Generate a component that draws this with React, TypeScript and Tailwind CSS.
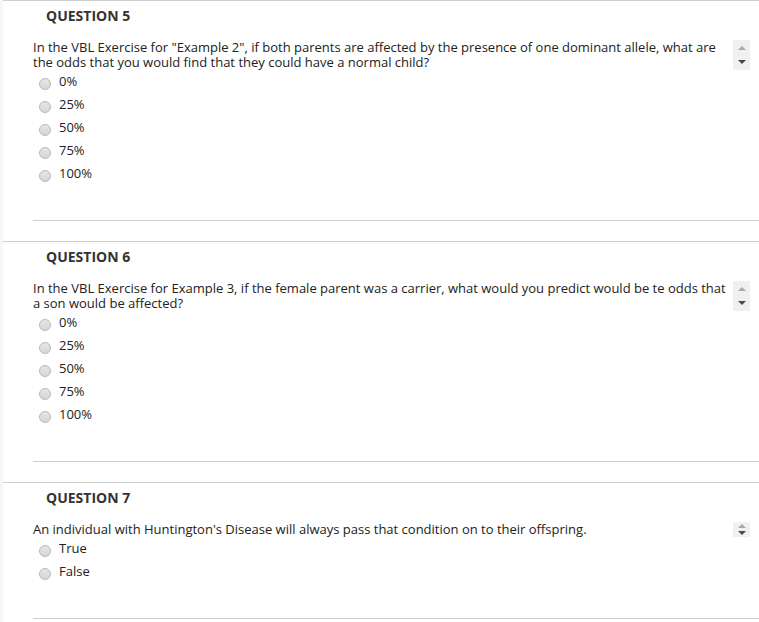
import React from 'react';

interface Question {
  number: number;
  text: string;
  options: string[];
}

const questions: Question[] = [
  {
    number: 5,
    text: 'In the VBL Exercise for "Example 2", if both parents are affected by the presence of one dominant allele, what are the odds that you would find that they could have a normal child?',
    options: ['0%', '25%', '50%', '75%', '100%'],
  },
  {
    number: 6,
    text: 'In the VBL Exercise for Example 3, if the female parent was a carrier, what would you predict would be te odds that a son would be affected?',
    options: ['0%', '25%', '50%', '75%', '100%'],
  },
  {
    number: 7,
    text: "An individual with Huntington's Disease will always pass that condition on to their offspring.",
    options: ['True', 'False'],
  },
];

const Spinner: React.FC = () => (
  <div className="w-[17px] shrink-0 bg-[#f0f0f0] flex flex-col items-center justify-around min-h-[15px] py-[1px]">
    <span className="block w-0 h-0 border-l-[4px] border-r-[4px] border-b-[4px] border-l-transparent border-r-transparent border-b-[#a8a8a8]" />
    <span className="block w-0 h-0 border-l-[4px] border-r-[4px] border-t-[4px] border-l-transparent border-r-transparent border-t-[#4a4a4a]" />
  </div>
);

const Radio: React.FC = () => (
  <span className="block w-[12px] h-[12px] rounded-full border border-[#b8b8b8] bg-gradient-to-b from-[#e6e6e6] to-[#d6d6d6]" />
);

const QuestionBlock: React.FC<{ q: Question }> = ({ q }) => (
  <section className="border-t border-[#cfcfcf]">
    <div className="pl-[30px]">
      <h2 className="mt-[7px] ml-[13px] h-[16px] leading-[16px] text-[14px] font-bold text-[#333]">
        QUESTION {q.number}
      </h2>
      <div className="mt-[16px] flex gap-[6px] pr-[9px]">
        <p className="w-[694px] text-[13px] leading-[15px] text-[#222]">{q.text}</p>
        <Spinner />
      </div>
      <div className="mt-[2px] flex flex-col">
        {q.options.map(opt => (
          <label key={opt} className="h-[23px] flex items-center gap-[8px] pl-[6px] text-[13px] text-[#222]">
            <Radio />
            <span className="-mt-[3px]">{opt}</span>
          </label>
        ))}
      </div>
      <div className="mt-[33px] border-t border-[#cfcfcf]" />
    </div>
    <div className="h-[20px]" />
  </section>
);

const App: React.FC = () => {
  return (
    <div className="w-[759px] h-[622px] overflow-hidden flex bg-white font-['Open_Sans',sans-serif]">
      <div className="w-[3px] shrink-0 bg-[#f7f7f7]" />
      <div className="flex-1">
        {questions.map(q => (
          <QuestionBlock key={q.number} q={q} />
        ))}
      </div>
    </div>
  );
};

export default App;
